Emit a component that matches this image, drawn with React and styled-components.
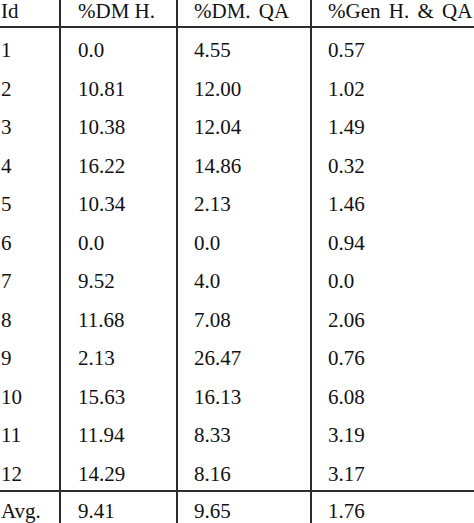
import React from "react";
import styled, { createGlobalStyle, css } from "styled-components";

const Global = createGlobalStyle`
  html, body {
    margin: 0;
    padding: 0;
    background: #ffffff;
  }
  body {
    font-family: "Liberation Serif", "Times New Roman", serif;
    color: #111111;
  }
`;

const Grid = styled.div`
  display: grid;
  grid-template-columns: 59px 117px 134px 1fr;
  grid-template-rows: 28px repeat(12, 38.5px) auto;
  width: 474px;
  height: 523px;
  overflow: hidden;
  font-size: 21px;
`;

const padLeft = [1, 17, 16, 16];

const Cell = styled.div`
  box-sizing: border-box;
  white-space: nowrap;
  line-height: 24px;
  padding-left: ${(p) => padLeft[p.$col]}px;
  ${(p) =>
    p.$col > 0 &&
    css`
      border-left: 2px solid #2b2b2b;
    `}
  ${(p) =>
    p.$kind === "head" &&
    css`
      line-height: 22px;
      border-bottom: 2px solid #2b2b2b;
      word-spacing: ${p.$col > 1 ? 3 : 0}px;
    `}
  ${(p) =>
    p.$kind === "body" &&
    css`
      padding-top: 10px;
    `}
  ${(p) =>
    p.$kind === "avg" &&
    css`
      padding-top: 7px;
      border-top: 2px solid #2b2b2b;
      height: 60px;
    `}
`;

const headers = ["Id", "%DM H.", "%DM. QA", "%Gen H. & QA"];

const rows = [
  ["1", "0.0", "4.55", "0.57"],
  ["2", "10.81", "12.00", "1.02"],
  ["3", "10.38", "12.04", "1.49"],
  ["4", "16.22", "14.86", "0.32"],
  ["5", "10.34", "2.13", "1.46"],
  ["6", "0.0", "0.0", "0.94"],
  ["7", "9.52", "4.0", "0.0"],
  ["8", "11.68", "7.08", "2.06"],
  ["9", "2.13", "26.47", "0.76"],
  ["10", "15.63", "16.13", "6.08"],
  ["11", "11.94", "8.33", "3.19"],
  ["12", "14.29", "8.16", "3.17"],
];

const avg = ["Avg.", "9.41", "9.65", "1.76"];

export default function App() {
  return (
    <>
      <Global />
      <Grid role="table">
        {headers.map((h, i) => (
          <Cell key={"h" + i} $col={i} $kind="head" role="columnheader">
            {h}
          </Cell>
        ))}
        {rows.map((r, ri) =>
          r.map((v, ci) => (
            <Cell key={ri + "-" + ci} $col={ci} $kind="body" role="cell">
              {v}
            </Cell>
          ))
        )}
        {avg.map((v, ci) => (
          <Cell key={"a" + ci} $col={ci} $kind="avg" role="cell">
            {v}
          </Cell>
        ))}
      </Grid>
    </>
  );
}
